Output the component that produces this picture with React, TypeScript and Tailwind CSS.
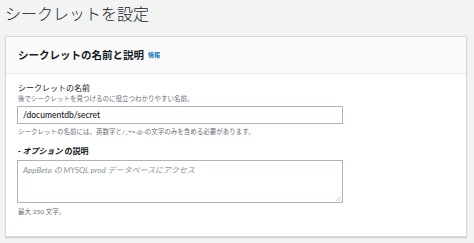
export default function App() {
  return (
    <div className="w-[474px] h-[243px] overflow-hidden bg-[#f2f3f3] text-[#16191f] font-['Lato','Noto_Sans_CJK_JP',sans-serif]">
      <h1 className="h-[36px] pl-[5px] pt-[2px] text-[16px] leading-[24px] font-light text-[#16191f]">
        シークレットを設定
      </h1>

      <div className="ml-[5px] w-[462px] h-[201px] bg-white border border-[#d5dbdb] shadow-[0_1px_1px_rgba(0,28,36,0.15)] flex flex-col">
        {/* header */}
        <div className="h-[37px] bg-[#fafafa] border-b border-[#eaeded] flex items-center pl-[12px] gap-[4px]">
          <h2 className="text-[10.5px] leading-[14px] font-bold">シークレットの名前と説明</h2>
          <a className="text-[6px] leading-[14px] font-bold text-[#0073bb]">情報</a>
        </div>

        {/* body */}
        <div className="flex flex-col pl-[11px] pt-[8px]">
          <label className="text-[8px] leading-[12px] pl-[1px]">シークレットの名前</label>
          <p className="text-[6.5px] leading-[9px] text-[#687078] pl-[1px]">
            後でシークレットを見つけるのに役立つわかりやすい名前。
          </p>
          <div className="mt-[3px] w-[326px] h-[18px] border border-[#aab7b8] flex items-center pl-[5px]">
            <span className="text-[8.5px] leading-[12px] font-medium">/documentdb/secret</span>
          </div>
          <p className="mt-[3px] text-[6.5px] leading-[9px] text-[#687078] pl-[1px]">
            シークレットの名前には、英数字と/_+=.@-の文字のみを含める必要があります。
          </p>
          <label className="mt-[9px] text-[8px] leading-[12px] font-bold pl-[1px]">
            <i>- オプション</i> の説明
          </label>
          <div className="mt-[3px] w-[326px] h-[43px] border border-[#aab7b8] relative pl-[5px] pt-[3px] text-[8px] leading-[12px]">
            <span className="italic text-[#879596]">
              AppBeta の MYSQL prod データベースにアクセス
            </span>
            <svg className="absolute right-[1px] bottom-[1px]" width="5" height="5" viewBox="0 0 5 5">
              <path d="M5 0L0 5M5 2.5L2.5 5" stroke="#aab7b8" strokeWidth="0.7" />
            </svg>
          </div>
          <p className="mt-[4px] text-[6.5px] leading-[9px] text-[#687078] pl-[1px]">最大 250 文字。</p>
        </div>
      </div>
    </div>
  );
}
